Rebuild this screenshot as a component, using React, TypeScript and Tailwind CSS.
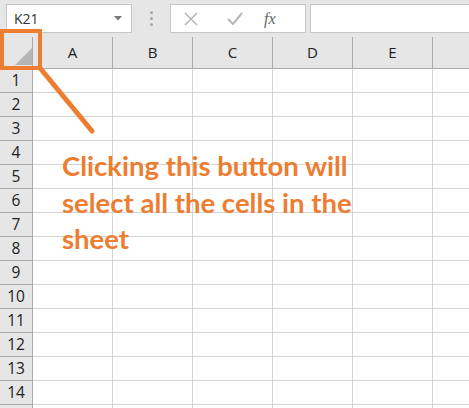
import React from "react";

const COLS = ["A", "B", "C", "D", "E", ""];
const ROWS = Array.from({ length: 15 }, (_, i) => i + 1);

function Toolbar() {
  return (
    <div className="flex h-[37px] items-start bg-[#e6e6e6] pt-[4px]">
      <div className="ml-[6px] flex h-[29px] w-[126px] items-center justify-between border border-[#c6c6c6] bg-white pl-[7px] pr-[9px]">
        <span className="text-[14px] text-[#333]">K21</span>
        <svg width="8" height="5" viewBox="0 0 8 5">
          <path d="M0 0 L8 0 L4 4.5 Z" fill="#777" />
        </svg>
      </div>
      <div className="flex w-[38px] flex-col items-center gap-[3px] pt-[7px]">
        <span className="h-[3px] w-[3px] rounded-full bg-[#a8a8a8]" />
        <span className="h-[3px] w-[3px] rounded-full bg-[#a8a8a8]" />
        <span className="h-[3px] w-[3px] rounded-full bg-[#a8a8a8]" />
      </div>
      <div className="flex h-[29px] w-[136px] items-center border border-[#c6c6c6] bg-white">
        <svg className="ml-[13px]" width="14" height="14" viewBox="0 0 14 14">
          <path d="M1 1 L13 13 M13 1 L1 13" stroke="#b8b8b8" strokeWidth="1.6" />
        </svg>
        <svg className="ml-[29px]" width="16" height="13" viewBox="0 0 16 13">
          <path d="M1 7 L6 12 L15 1" stroke="#b8b8b8" strokeWidth="2" fill="none" />
        </svg>
        <span className="ml-[21px] font-['Liberation_Serif',serif] text-[16px] italic text-[#666]">
          fx
        </span>
      </div>
      <div className="ml-[4px] h-[29px] flex-1 border border-r-0 border-[#c6c6c6] bg-white" />
    </div>
  );
}

export default function App() {
  return (
    <div className="relative h-[408px] w-[469px] overflow-hidden bg-white font-['Open_Sans',sans-serif]">
      <Toolbar />

      {/* column headers */}
      <div className="flex h-[32px] border-b border-[#ababab] bg-[#e6e6e6]">
        <div className="relative w-[33px] shrink-0 border-r border-[#ababab]">
          <svg className="absolute left-[15px] top-[11px]" width="17" height="17" viewBox="0 0 17 17">
            <path d="M17 0 L17 17 L0 17 Z" fill="#b5b5b5" />
          </svg>
        </div>
        {COLS.map((c, i) => (
          <div
            key={i}
            className="flex w-[80px] shrink-0 items-end justify-center border-r border-[#ababab] pb-[5px] text-[15px] text-[#222]"
          >
            {c}
          </div>
        ))}
      </div>

      {/* rows */}
      {ROWS.map((r) => (
        <div key={r} className="flex h-[24px]">
          <div className="flex w-[33px] shrink-0 items-center justify-center border-b border-r border-[#ababab] bg-[#e6e6e6] text-[15.5px] text-[#222]">
            {r < 15 ? r : ""}
          </div>
          {COLS.map((_, i) => (
            <div key={i} className="w-[80px] shrink-0 border-b border-r border-[#d4d4d4]" />
          ))}
        </div>
      ))}

      {/* annotation */}
      <svg className="absolute left-0 top-0" width="469" height="408">
        <rect x="2" y="31" width="38" height="37" fill="none" stroke="#ed7d31" strokeWidth="4" />
        <path d="M40 68 L92 131" stroke="#ed7d31" strokeWidth="5" strokeLinecap="round" />
      </svg>
      <p className="absolute left-[62px] top-[148px] font-['Lato',sans-serif] text-[27.5px] font-bold leading-[36.5px] text-[#ed7d31]">
        Clicking this button will
        <br />
        select all the cells in the
        <br />
        sheet
      </p>
    </div>
  );
}
